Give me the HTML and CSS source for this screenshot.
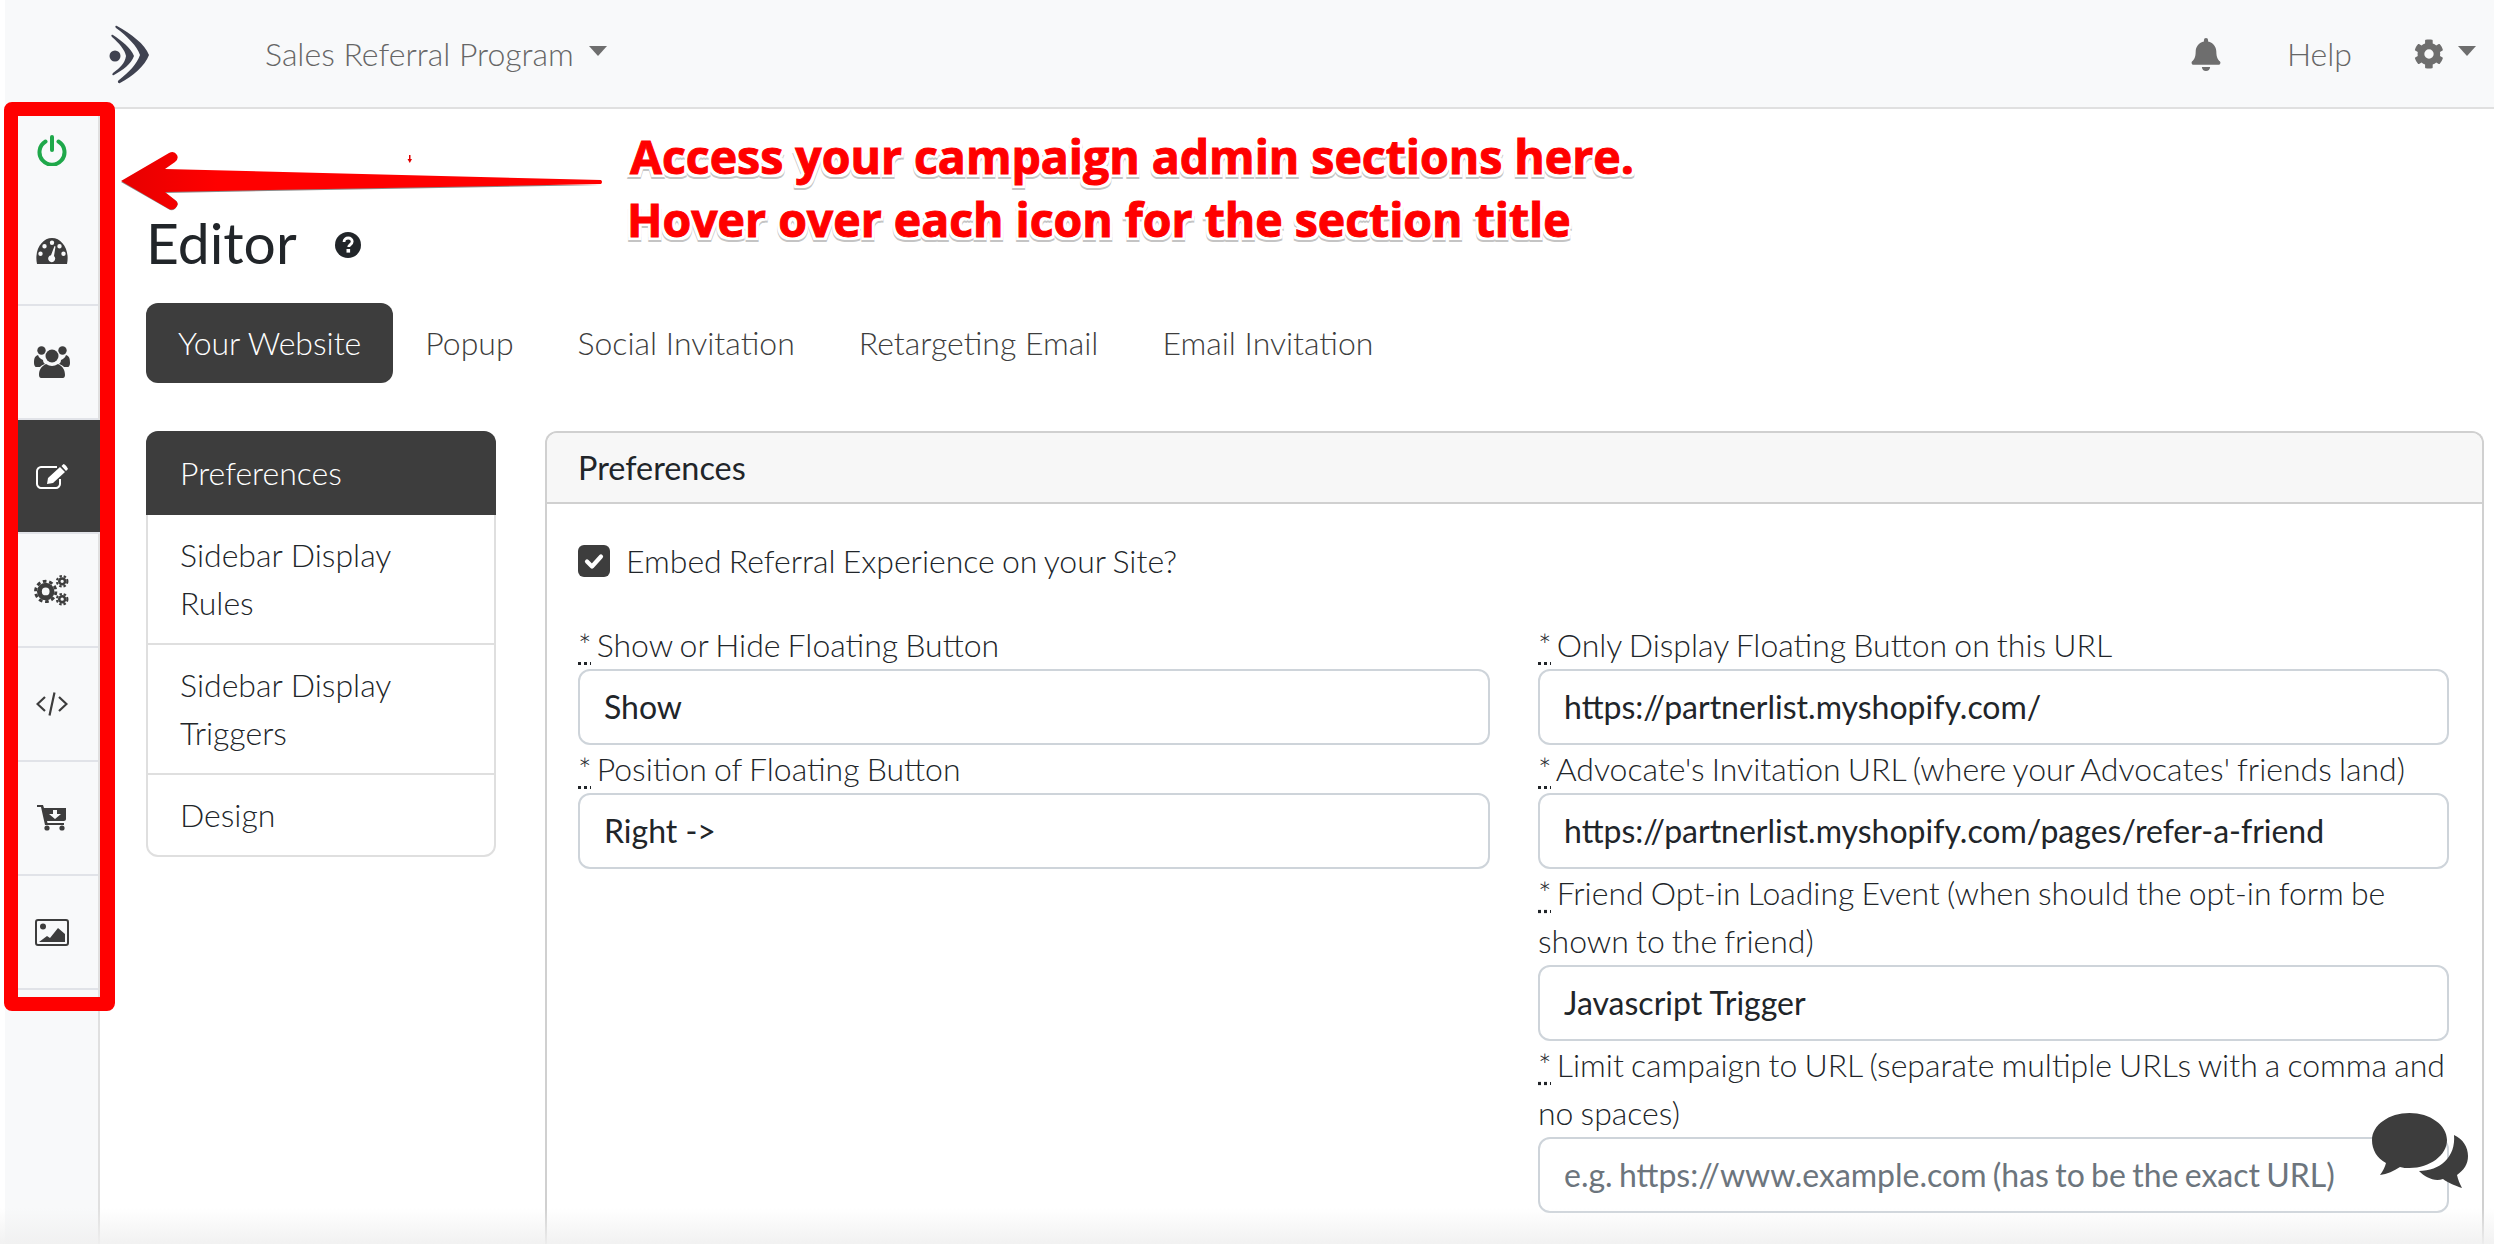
FILE: index.html
```html
<!DOCTYPE html>
<html lang="en">
<head>
<meta charset="utf-8">
<title>Editor</title>
<link rel="stylesheet" href="styles.css">
</head>
<body>
<header class="topbar">
  <svg class="logo" viewBox="0 0 70 80"><circle cx="20" cy="42" r="5.500" fill="#3f4250"/><path fill="#3f4250" d="M22 12C36 20 50 30 54 41 50 52 38 62 25 69 23 70 22 67 24 66 34 58 42 50 45 41 42 32 32 22 21 14 20 13 20 11 22 12Z"/><path fill="#3f4250" d="M18 21C27 27 36 34 39 42 36 50 28 56 19 61 17 62 17 60 18 59 25 54 30 49 31 42 30 36 24 29 17 23 16 22 16 20 18 21Z"/></svg>
  <a class="campaign">Sales Referral Program<span class="caret"></span></a>
  <div class="top-right">
    <svg class="bell" viewBox="0 0 448 512"><path fill="#6e6e6e" d="M224 512c35 0 64-29 64-64H160c0 35 29 64 64 64zm215-150c-19-21-55-52-55-154 0-78-54-140-128-155V32a32 32 0 1 0-64 0v21C118 68 64 130 64 208c0 102-36 133-55 154-6 6-9 14-9 22 0 16 13 32 32 32h384c19 0 32-16 32-32 0-8-3-16-9-22z"/></svg>
    <a class="help">Help</a>
    <span class="gear-wrap">
      <svg class="gear" viewBox="0 0 512 512"><path fill="#6e6e6e" d="M487 316l-43-25a195 195 0 0 0 0-70l43-25c5-3 7-9 5-14-11-36-30-68-55-95-4-4-10-5-15-2l-43 25c-18-15-38-27-60-35V25c0-6-4-11-9-12-37-8-75-8-111 0-6 1-10 6-10 12v50c-22 8-42 20-60 35L86 85c-5-3-11-2-15 2-25 27-44 59-55 95-2 5 0 11 5 14l43 25a195 195 0 0 0 0 70l-43 25c-5 3-7 9-5 14 11 36 30 68 55 95 4 4 10 5 15 2l43-25c18 15 38 27 60 35v50c0 6 4 11 10 12 37 8 75 8 111 0 5-1 9-6 9-12v-50c22-8 42-20 60-35l43 25c5 3 11 2 15-2 25-27 44-59 55-95 2-5 0-11-5-14zM256 336a80 80 0 1 1 0-160 80 80 0 0 1 0 160z"/></svg>
      <span class="caret"></span>
    </span>
  </div>
</header>

<div class="shell">
  <nav class="rail">
    <a class="rail-item first"><svg class="ico power" viewBox="0 0 30 31"><path d="M8.500 6.500A12.500 12.500 0 1 0 21.500 6.500" fill="none" stroke="#1fa84a" stroke-width="4" stroke-linecap="round"/><path d="M15 2v13" stroke="#1fa84a" stroke-width="4" stroke-linecap="round"/></svg></a>
    <a class="rail-item gauge"><svg class="ico" viewBox="0 0 32 26"><path fill="#3d3d3d" fill-rule="evenodd" d="M1 26C-2 12 6 0 16 0s18 12 15 26H1zM16 2.500a2.200 2.200 0 1 0 0 4.400 2.200 2.200 0 0 0 0-4.400zM8.500 6a2.200 2.200 0 1 0 0 4.400 2.200 2.200 0 0 0 0-4.400zM23.500 6a2.200 2.200 0 1 0 0 4.400 2.200 2.200 0 0 0 0-4.400zM4.500 13.500a2.200 2.200 0 1 0 0 4.400 2.200 2.200 0 0 0 0-4.400zM27.500 13.500a2.200 2.200 0 1 0 0 4.400 2.200 2.200 0 0 0 0-4.400zM18.500 8l-3.500 9.200a3.500 3.500 0 1 0 3 .8L19.500 8.500z"/></svg></a>
    <a class="rail-item"><svg class="ico users" viewBox="0 0 36 32"><g fill="#3d3d3d"><circle cx="7.500" cy="4.500" r="4.200"/><circle cx="28.500" cy="4.500" r="4.200"/><path d="M0 17c0-5 1-7 4-8 1 3 3 4 5 5 0 2 1 3 2 4-3 1-4 2-5 3H2c-1 0-2-2-2-4zM36 17c0-5-1-7-4-8-1 3-3 4-5 5 0 2-1 3-2 4 3 1 4 2 5 3h4c1 0 2-2 2-4z"/><circle cx="18" cy="10" r="6.500"/><path d="M7 32c-1 0-2-1-2-3 0-6 3-9 7-11 2 1 4 2 6 2s4-1 6-2c4 2 7 5 7 11 0 2-1 3-2 3H7z"/></g></svg></a>
    <a class="rail-item active"><svg class="ico edit" viewBox="0 0 32 25"><path d="M24 15v5c0 2-2 4-4 4H5c-2 0-4-2-4-4V7c0-2 2-4 4-4h16" fill="none" stroke="#fff" stroke-width="2"/><path fill="#fff" d="M11 20l1-6L24 3l5 5-12 11-6 1zM25.500 2l2-2c1 0 4 3 4.500 5l-2 2z"/></svg></a>
    <a class="rail-item"><svg class="ico cogs" viewBox="0 0 36 32"><g fill="none" stroke="#3d3d3d"><circle cx="12" cy="17" r="6.500" stroke-width="5"/><circle cx="12" cy="17" r="10.500" stroke-width="3" stroke-dasharray="3.800 2.800"/><circle cx="29" cy="6.500" r="3" stroke-width="2.600"/><circle cx="29" cy="6.500" r="5.400" stroke-width="2.200" stroke-dasharray="2.500 1.900"/><circle cx="29" cy="25" r="3" stroke-width="2.600"/><circle cx="29" cy="25" r="5.400" stroke-width="2.200" stroke-dasharray="2.500 1.900"/></g></svg></a>
    <a class="rail-item"><svg class="ico code" viewBox="0 0 32 24"><path d="M9 5L1.500 12 9 19M23 5l7.500 7L23 19M18.500 .5l-5 23" fill="none" stroke="#3d3d3d" stroke-width="2.200"/></svg></a>
    <a class="rail-item"><svg class="ico cart" viewBox="0 0 29 26"><path fill="#3d3d3d" fill-rule="evenodd" d="M0 0h6l1 3h22v11c0 1-1 2-2 2H10l.5 2H27v2H8L4 2H0zM16 5v4h-4l6 5 6-5h-4V5z"/><circle cx="10" cy="23" r="2.600" fill="#3d3d3d"/><circle cx="25" cy="23" r="2.600" fill="#3d3d3d"/></svg></a>
    <a class="rail-item"><svg class="ico picture" viewBox="0 0 34 27"><rect x="1" y="1" width="32" height="25" rx="2" fill="none" stroke="#3d3d3d" stroke-width="2"/><circle cx="8" cy="7.500" r="3" fill="#3d3d3d"/><path fill="#3d3d3d" d="M4 23l8-6 3 2 8-10 7 6v8z"/></svg></a>
  </nav>

  <main class="content">
    <h1 class="title">Editor<svg class="qmark" viewBox="0 0 26 26"><circle cx="13" cy="13" r="13" fill="#212529"/><path d="M9 10c0-2.500 2-4 4.200-4 2.300 0 4 1.500 4 3.500 0 3-3.500 3-3.500 5.500" fill="none" stroke="#fff" stroke-width="2.800"/><rect x="11.500" y="17" width="3.600" height="3.600" fill="#fff"/></svg></h1>
    <ul class="tabs">
      <li class="tab on">Your Website</li>
      <li class="tab">Popup</li>
      <li class="tab">Social Invitation</li>
      <li class="tab">Retargeting Email</li>
      <li class="tab">Email Invitation</li>
    </ul>
    <div class="editor">
      <ul class="side">
        <li class="side-item on">Preferences</li>
        <li class="side-item">Sidebar Display Rules</li>
        <li class="side-item">Sidebar Display Triggers</li>
        <li class="side-item">Design</li>
      </ul>
      <section class="card">
        <h2 class="card-head">Preferences</h2>
        <div class="card-body">
          <label class="check"><span class="box"><svg viewBox="0 0 32 32"><path d="M9 16.500l5 5 9-10" fill="none" stroke="#fff" stroke-width="4.200" stroke-linecap="round" stroke-linejoin="round"/></svg></span>Embed Referral Experience on your Site?</label>
          <div class="cols">
            <div class="col">
              <label class="lbl"><abbr>*</abbr> Show or Hide Floating Button</label>
              <div class="field">Show</div>
              <label class="lbl"><abbr>*</abbr> Position of Floating Button</label>
              <div class="field">Right -&gt;</div>
            </div>
            <div class="col">
              <label class="lbl"><abbr>*</abbr> Only Display Floating Button on this URL</label>
              <div class="field">https://partnerlist.myshopify.com/</div>
              <label class="lbl"><abbr>*</abbr> Advocate's Invitation URL (where your Advocates' friends land)</label>
              <div class="field">https://partnerlist.myshopify.com/pages/refer-a-friend</div>
              <label class="lbl"><abbr>*</abbr> Friend Opt-in Loading Event (when should the opt-in form be shown to the friend)</label>
              <div class="field">Javascript Trigger</div>
              <label class="lbl"><abbr>*</abbr> Limit campaign to URL (separate multiple URLs with a comma and no spaces)</label>
              <div class="field ph">e.g. https://www.example.com (has to be the exact URL)</div>
            </div>
          </div>
        </div>
      </section>
    </div>
  </main>
</div>

<div class="fade"></div>

<div class="frame"></div>
<svg class="arrow" viewBox="0 0 490 62">
  <defs><linearGradient id="arrowfill" x1="0" x2="1" y1="0" y2="0"><stop offset="0" stop-color="#e60000"/><stop offset=".2" stop-color="#f00"/></linearGradient></defs>
  <path fill="#8a8a8a" d="M1 32L50 60Q55 61 57 56 59 52 55 50L45 43 481 35Z"/>
  <path fill="url(#arrowfill)" d="M1 31L49 3Q54 0 57 5 59 9 55 12L45 19 481 30Q483 32 481 34L45 42 55 50Q59 53 57 56 54 61 49 59Z"/>
  <path fill="#e00000" d="M289 5h1.500v4h1.500l-2.200 4-2.300-4h1.500z"/>
</svg>
<p class="note"><span class="note-1">Access your campaign admin sections here.</span><span>Hover over each icon for the section title</span></p>
<svg class="chat" viewBox="0 0 96 76"><path fill="#3d3d3d" d="M37.500 0C58 0 75 12 75 27 75 42 58 55 37.500 55 34 55 31 55 28 54 22 58 15 61 8 62 11 58 13 54 14 50 5 45 0 37 0 27 0 12 17 0 37.500 0Z"/><path fill="#3d3d3d" d="M82 22C91 26 96 34 96 43 96 51 92 57 85 62 86 67 88 71 90 75 84 73 76 70 71 66 62 69 53 64 47 58 68 58 84 44 82 22Z"/></svg>
</body>
</html>
```
FILE: styles.css
```css
* { box-sizing: border-box; }
html, body { margin: 0; height: 100%; }
body {
  height: 1244px;
  overflow: hidden;
  background: #fff;
  font-family: "Lato", "Liberation Sans", sans-serif;
  font-size: 32px;
  line-height: 48px;
  font-weight: 300;
  color: #212529;
  padding-left: 5px;
}
a { color: inherit; text-decoration: none; }
ul { list-style: none; margin: 0; padding: 0; }

.topbar {
  height: 109px;
  background: #f8f9fa;
  border-bottom: 2px solid #e0e0e0;
  display: flex;
  align-items: center;
  padding-left: 90px;
  padding-right: 18px;
}
.logo { width: 70px; height: 80px; margin-right: 100px; }
.campaign { color: #666; display: flex; align-items: center; }
.caret {
  display: inline-block;
  width: 0; height: 0;
  border-top: 10px solid #6e6e6e;
  border-left: 9px solid transparent;
  border-right: 9px solid transparent;
  margin-left: 15px;
  margin-top: -6px;
}
.top-right { margin-left: auto; display: flex; align-items: center; color: #666; }
.bell { width: 30px; height: 33px; margin-right: 66px; margin-top: 2px; }
.help { margin-right: 62px; }
.gear-wrap { display: flex; align-items: center; }
.gear { width: 30px; height: 30px; }
.gear-wrap .caret { margin-left: 14px; }

.shell { display: flex; height: 1135px; overflow: hidden; }
.rail {
  width: 95px;
  flex: none;
  background: #f8f9fa;
  border-right: 2px solid #e0e0e0;
  display: flex;
  flex-direction: column;
}
.rail-item {
  height: 114px;
  flex: none;
  display: flex;
  align-items: center;
  justify-content: center;
  border-bottom: 2px solid #e1e3e8;
}
.rail-item.first { height: 83px; border-bottom: 0; }
.rail-item.gauge { padding-top: 6px; }
.rail-item.active { background: #3d3d3d; margin-right: -2px; padding-right: 2px; }
.ico { width: 32px; height: 26px; }
.power { width: 30px; height: 31px; }
.users { width: 36px; height: 32px; }
.edit { height: 25px; }
.cogs { width: 35px; height: 31px; }
.code { height: 24px; }
.cart { width: 29px; height: 26px; }
.picture { width: 34px; height: 27px; }

.content { flex: 1; padding: 0 0 0 46px; min-width: 0; }
.title {
  margin: 98px 0 0;
  height: 70px;
  font-size: 57px;
  line-height: 70px;
  font-weight: 400;
  display: flex;
  align-items: center;
}
.qmark { width: 26px; height: 26px; margin-left: 38px; margin-top: 6px; }
.tabs { display: flex; margin-top: 26px; }
.tab { padding: 16px 32px; line-height: 48px; color: #3d3d3d; }
.tab.on { background: #3d3d3d; color: #fff; border-radius: 12px; }

.editor { display: flex; margin-top: 48px; align-items: flex-start; }
.side {
  width: 350px;
  flex: none;
  border: 2px solid #dfdfdf;
  border-radius: 12px;
}
.side-item { padding: 16px 32px; border-bottom: 2px solid #dfdfdf; }
.side-item:last-child { border-bottom: 0; }
.side-item.on {
  background: #3d3d3d;
  color: #fff;
  margin: -2px -2px 0;
  padding: 18px 34px;
  border-bottom: 0;
  border-radius: 12px 12px 0 0;
}
.card {
  margin-left: 49px;
  width: 1939px;
  height: 813px;
  border: 2px solid #d0d0d0;
  border-bottom: 0;
  border-radius: 12px 12px 0 0;
}
.card-head {
  margin: 0;
  height: 71px;
  padding: 11px 32px 0 31px;
  font-size: 32.4px;
  line-height: 48px;
  font-weight: 400;
  background: #f7f7f7;
  border-bottom: 2px solid #d0d0d0;
  border-radius: 10px 10px 0 0;
}
.card-body { padding: 33px 32px 0 31px; }
.check { display: flex; align-items: center; height: 48px; word-spacing: -1.6px; }
.box {
  width: 32px; height: 32px;
  background: #3d3d3d;
  border-radius: 6px;
  margin-right: 16px;
  display: flex;
}
.cols { display: grid; grid-template-columns: 912px 911px; column-gap: 48px; margin-top: 36px; }
.lbl { display: block; word-spacing: -1.6px; margin-top: -1px; padding-top: 1px; }
abbr { text-decoration: underline dotted; text-underline-offset: 5px; margin-right: -2px; }
.field {
  height: 76px;
  border: 2px solid #ced4da;
  border-radius: 12px;
  padding: 12px 24px;
  line-height: 48px;
  font-weight: 400;
  white-space: nowrap;
}
.field.ph { color: #6c757d; word-spacing: -1.9px; }

.fade {
  position: absolute;
  left: 0; right: 0; bottom: 0;
  height: 36px;
  background: linear-gradient(to bottom, rgba(240,240,240,0), rgba(240,240,240,.9));
}
.frame {
  position: absolute;
  left: 4px; top: 102px;
  width: 111px; height: 909px;
  border: 14px solid #f00;
  border-width: 14px 15px 14px 14px;
  border-radius: 8px;
}
.arrow { position: absolute; left: 120px; top: 150px; width: 490px; height: 62px; }
.note {
  position: absolute;
  left: 627px; top: 125px;
  margin: 0;
  font-family: "Open Sans", "Noto Sans", sans-serif;
  font-weight: 700;
  font-size: 46.4px;
  line-height: 63px;
  color: #f00;
  white-space: nowrap;
  -webkit-text-stroke: 1px #f00;
  text-shadow: 3px 0 0 #fff, -3px 0 0 #fff, 0 -3px 0 #fff, 0 3px 0 #fff, 3px 3px 0 #fff, -3px 3px 0 #fff, 3px -3px 0 #fff, -3px -3px 0 #fff, 0 5px 0 #c4c4c4, 3px 5px 0 #c4c4c4, -3px 5px 0 #c4c4c4;
}
.note span { display: block; }
.note .note-1 { padding-left: 3px; }
.chat { position: absolute; left: 2372px; top: 1113px; width: 96px; height: 76px; }
```
